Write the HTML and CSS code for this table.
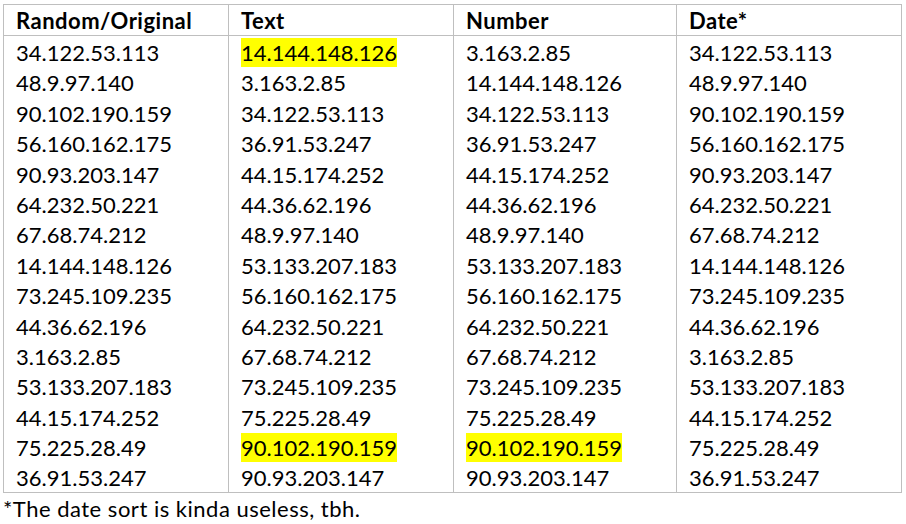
FILE: index.html
```html
<!DOCTYPE html>
<html>
<head>
<meta charset="utf-8">
<link rel="stylesheet" href="styles.css">
</head>
<body>
<div class="page">
<div class="sort-table">
<div class="cell head">Random/Original</div><div class="cell head">Text</div><div class="cell head">Number</div><div class="cell head">Date*</div>
<div class="cell"><span class="v">34.122.53.113</span></div><div class="cell"><span class="v hl">14.144.148.126</span></div><div class="cell"><span class="v">3.163.2.85</span></div><div class="cell"><span class="v">34.122.53.113</span></div>
<div class="cell"><span class="v">48.9.97.140</span></div><div class="cell"><span class="v">3.163.2.85</span></div><div class="cell"><span class="v">14.144.148.126</span></div><div class="cell"><span class="v">48.9.97.140</span></div>
<div class="cell"><span class="v">90.102.190.159</span></div><div class="cell"><span class="v">34.122.53.113</span></div><div class="cell"><span class="v">34.122.53.113</span></div><div class="cell"><span class="v">90.102.190.159</span></div>
<div class="cell"><span class="v">56.160.162.175</span></div><div class="cell"><span class="v">36.91.53.247</span></div><div class="cell"><span class="v">36.91.53.247</span></div><div class="cell"><span class="v">56.160.162.175</span></div>
<div class="cell"><span class="v">90.93.203.147</span></div><div class="cell"><span class="v">44.15.174.252</span></div><div class="cell"><span class="v">44.15.174.252</span></div><div class="cell"><span class="v">90.93.203.147</span></div>
<div class="cell"><span class="v">64.232.50.221</span></div><div class="cell"><span class="v">44.36.62.196</span></div><div class="cell"><span class="v">44.36.62.196</span></div><div class="cell"><span class="v">64.232.50.221</span></div>
<div class="cell"><span class="v">67.68.74.212</span></div><div class="cell"><span class="v">48.9.97.140</span></div><div class="cell"><span class="v">48.9.97.140</span></div><div class="cell"><span class="v">67.68.74.212</span></div>
<div class="cell"><span class="v">14.144.148.126</span></div><div class="cell"><span class="v">53.133.207.183</span></div><div class="cell"><span class="v">53.133.207.183</span></div><div class="cell"><span class="v">14.144.148.126</span></div>
<div class="cell"><span class="v">73.245.109.235</span></div><div class="cell"><span class="v">56.160.162.175</span></div><div class="cell"><span class="v">56.160.162.175</span></div><div class="cell"><span class="v">73.245.109.235</span></div>
<div class="cell"><span class="v">44.36.62.196</span></div><div class="cell"><span class="v">64.232.50.221</span></div><div class="cell"><span class="v">64.232.50.221</span></div><div class="cell"><span class="v">44.36.62.196</span></div>
<div class="cell"><span class="v">3.163.2.85</span></div><div class="cell"><span class="v">67.68.74.212</span></div><div class="cell"><span class="v">67.68.74.212</span></div><div class="cell"><span class="v">3.163.2.85</span></div>
<div class="cell"><span class="v">53.133.207.183</span></div><div class="cell"><span class="v">73.245.109.235</span></div><div class="cell"><span class="v">73.245.109.235</span></div><div class="cell"><span class="v">53.133.207.183</span></div>
<div class="cell"><span class="v">44.15.174.252</span></div><div class="cell"><span class="v">75.225.28.49</span></div><div class="cell"><span class="v">75.225.28.49</span></div><div class="cell"><span class="v">44.15.174.252</span></div>
<div class="cell"><span class="v">75.225.28.49</span></div><div class="cell"><span class="v hl">90.102.190.159</span></div><div class="cell"><span class="v hl">90.102.190.159</span></div><div class="cell"><span class="v">75.225.28.49</span></div>
<div class="cell"><span class="v">36.91.53.247</span></div><div class="cell"><span class="v">90.93.203.147</span></div><div class="cell"><span class="v">90.93.203.147</span></div><div class="cell"><span class="v">36.91.53.247</span></div>
</div>
<p class="note">*The date sort is kinda useless, tbh.</p>
</div>
</body>
</html>
```

FILE: styles.css
```css
html, body {
  margin: 0;
  padding: 0;
  background: #ffffff;
}
body {
  font-family: Lato, "Open Sans", sans-serif;
  font-size: 22px;
  color: #000000;
}
.page {
  padding: 4px 0 0 3px;
}
.sort-table {
  display: grid;
  grid-template-columns: 224px 225px 223px 225px;
  grid-template-rows: 31px repeat(15, 30.4px);
  width: 899px;
  box-sizing: border-box;
  border: 1px solid #bfbfbf;
}
.cell {
  box-sizing: border-box;
  padding: 2px 0 0 12px;
  white-space: nowrap;
  line-height: 29px;
}
.cell:not(:nth-child(4n+1)) {
  border-left: 1px solid #bfbfbf;
}
.head {
  font-weight: 700;
  padding-top: 1px;
  letter-spacing: 0.5px;
  border-bottom: 1px solid #bfbfbf;
}
.v {
  display: inline-block;
  line-height: 29px;
  vertical-align: top;
}
.hl {
  background: #ffff00;
}
.note {
  margin: 5px 0 0 0;
  line-height: 22px;
  letter-spacing: 0.5px;
}
```
